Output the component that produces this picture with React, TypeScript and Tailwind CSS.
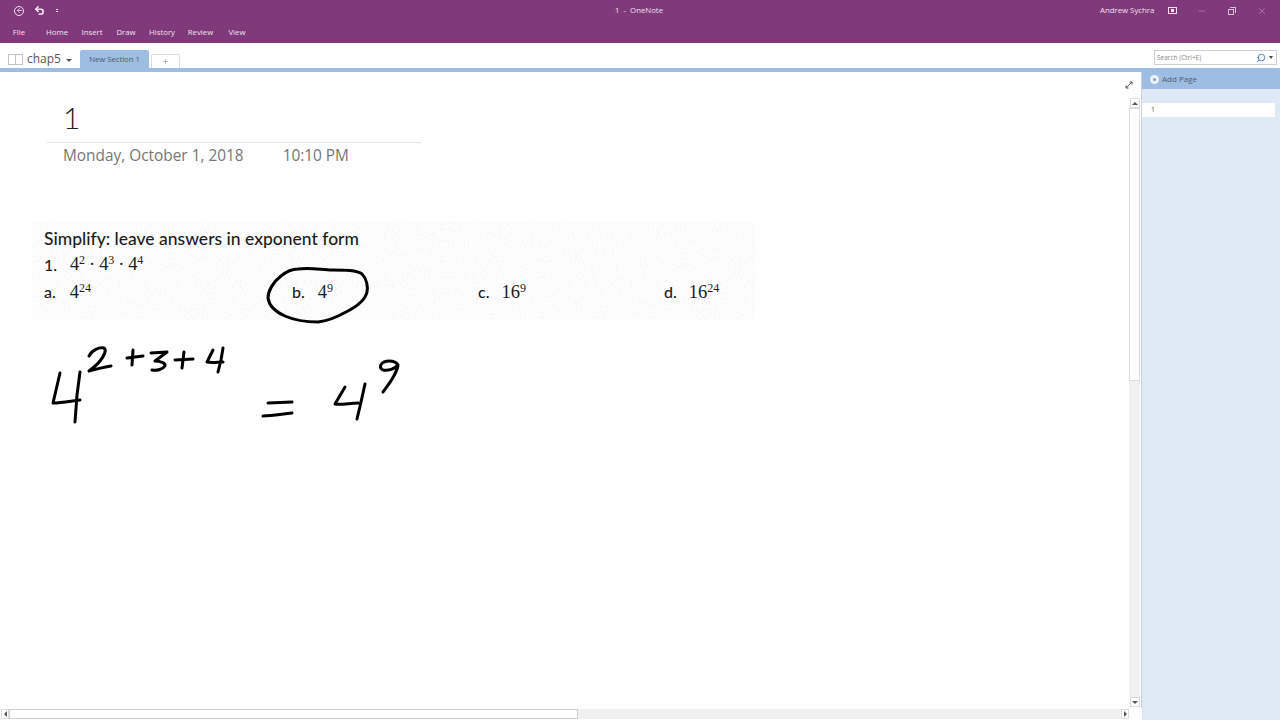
import { ArrowLeft, Search, Undo2, X, Minus, Plus } from 'lucide-react'

const tabs = [
  { label: 'File', width: 'w-[38px]' },
  { label: 'Home', width: 'w-[38px]' },
  { label: 'Insert', width: 'w-[32px]' },
  { label: 'Draw', width: 'w-[36px]' },
  { label: 'History', width: 'w-[36px]' },
  { label: 'Review', width: 'w-[41px]' },
  { label: 'View', width: 'w-[32px]' },
]

function TitleBar() {
  return (
    <header className="h-[43px] shrink-0 bg-[#80397b] text-[#efe2ee]">
      <div className="flex h-[21px] items-center">
        <div className="flex w-[14px]" />
        <span className="flex h-[10px] w-[10px] items-center justify-center rounded-full border border-[#efe2ee]">
          <ArrowLeft size={7} strokeWidth={2.5} />
        </span>
        <Undo2 size={11} strokeWidth={3} className="ml-[10px] text-white" />
        <span className="ml-[11px] flex flex-col gap-[1px]">
          <span className="h-[1px] w-[2px] bg-[#efe2ee]" />
          <span className="h-[1px] w-[2px] bg-[#efe2ee]" />
        </span>
        <span className="ml-[557px] w-[60px] whitespace-pre text-[7.8px] [font-family:'Open_Sans',sans-serif]">1  -  OneNote</span>
        <span className="ml-[425px] w-[60px] whitespace-nowrap text-[7.8px] [font-family:'Open_Sans',sans-serif]">Andrew Sychra</span>
        <span className="ml-[8px] flex h-[7px] w-[9px] items-center justify-center border border-[#efe2ee]">
          <span className="h-[3px] w-[3px] bg-[#efe2ee]" />
        </span>
        <Minus size={10} strokeWidth={1} className="ml-[20px] opacity-80" />
        <span className="relative ml-[21px] h-[8px] w-[8px] opacity-80">
          <span className="absolute bottom-0 left-0 h-[6px] w-[6px] border border-[#efe2ee]" />
          <span className="absolute right-0 top-0 h-[6px] w-[6px] border-r border-t border-[#efe2ee]" />
        </span>
        <X size={10} strokeWidth={1} className="ml-[21px] opacity-80" />
      </div>
      <nav className="flex h-[22px] items-center pt-[2px] text-[7.8px] [font-family:'Open_Sans',sans-serif]">
        {tabs.map((tab) => (
          <span key={tab.label} className={`${tab.width} whitespace-nowrap text-center`}>
            {tab.label}
          </span>
        ))}
      </nav>
    </header>
  )
}

function SectionBar() {
  return (
    <div className="relative flex h-[25px] shrink-0 items-end bg-white pl-[8px] [font-family:'Open_Sans',sans-serif]">
      <div className="flex h-[18px] items-center text-[#555]">
        <span className="flex h-[11px] w-[15px] border border-[#c4c4c4]">
          <span className="w-1/2 border-r border-[#c4c4c4]" />
        </span>
        <span className="ml-[4px] text-[12px]">chap5</span>
        <span className="ml-[5px] mt-[2px] h-0 w-0 border-x-[3px] border-t-[3px] border-x-transparent border-t-[#555]" />
      </div>
      <div className="ml-[8px] flex h-[18px] w-[69px] items-center justify-center rounded-t-[2px] bg-[#9dbde3] pt-[2px] text-[7.7px] text-[#4c5a6b]">
        New Section 1
      </div>
      <div className="ml-[2px] flex h-[14px] w-[29px] items-center justify-center rounded-t-[2px] border-x border-t border-[#dcdcdc] pb-[1px] text-[#666]">
        <Plus size={7} strokeWidth={1.5} />
      </div>
      <div className="mb-[3px] ml-auto mr-[3px] flex h-[15px] w-[123px] items-center border border-[#cfcfcf] pl-[2px] pr-[2px] text-[6.5px] text-[#8a8a8a]">
        <span className="flex-1">Search (Ctrl+E)</span>
        <Search size={10} strokeWidth={2} className="-scale-x-100 text-[#2f6db0]" />
        <span className="ml-[3px] mr-[1px] h-0 w-0 border-x-[2px] border-t-[3px] border-x-transparent border-t-[#444]" />
      </div>
    </div>
  )
}

function Sup({ children }: { children: string }) {
  return <span className="relative -top-[6px] text-[12px]">{children}</span>
}

function ScanImage() {
  return (
    <div className="absolute left-[32px] top-[150px] h-[98px] w-[723px] overflow-hidden bg-[#fdfdfd] pl-[12px] pt-[6px] text-[#1c1c1c]">
      <svg className="absolute inset-0 h-full w-full" aria-hidden="true">
        <filter id="speckle">
          <feTurbulence type="fractalNoise" baseFrequency="0.5" numOctaves="2" seed="4" />
          <feColorMatrix values="0 0 0 0 0.6  0 0 0 0 0.6  0 0 0 0 0.6  0 0 0 2.4 -1.15" />
        </filter>
        <rect width="100%" height="100%" filter="url(#speckle)" opacity="0.2" />
      </svg>
      <div className="relative">
        <p className="h-[23px] whitespace-nowrap text-[17.5px] leading-[21px] [font-family:'Lato',sans-serif] font-medium">
          Simplify: leave answers in exponent form
        </p>
        <p className="flex h-[28px] items-center whitespace-nowrap text-[16px]">
          <span className="w-[26px] [font-family:'Lato',sans-serif] font-medium">1.</span>
          <span className="text-[18.5px] tracking-[-0.3px] [font-family:'Liberation_Serif',serif]">
            4<Sup>2</Sup> · 4<Sup>3</Sup> · 4<Sup>4</Sup>
          </span>
        </p>
        <div className="grid h-[28px] grid-cols-[248px_186px_186px_1fr] items-center whitespace-nowrap text-[16px] [font-family:'Lato',sans-serif] font-medium">
          <span>
            a.<span className="ml-[14px] text-[18.5px] [font-family:'Liberation_Serif',serif] font-normal">4<Sup>24</Sup></span>
          </span>
          <span>
            b.<span className="ml-[13px] text-[18.5px] [font-family:'Liberation_Serif',serif] font-normal">4<Sup>9</Sup></span>
          </span>
          <span>
            c.<span className="ml-[12px] text-[18.5px] [font-family:'Liberation_Serif',serif] font-normal">16<Sup>9</Sup></span>
          </span>
          <span>
            d.<span className="ml-[12px] text-[18.5px] [font-family:'Liberation_Serif',serif] font-normal">16<Sup>24</Sup></span>
          </span>
        </div>
      </div>
    </div>
  )
}

// handwriting, coordinates are page pixels shifted up by the 72px chrome
function Ink() {
  return (
    <svg
      className="absolute left-0 top-0 h-[640px] w-[1129px]"
      viewBox="0 72 1129 640"
      fill="none"
      stroke="#000"
      strokeWidth="3"
      strokeLinecap="round"
      strokeLinejoin="round"
    >
      <path d="M298 269C310 267 322 270 332 270C345 270 357 270 362 274C367 279 368 287 367 292C365 301 356 307 346 312C337 317 328 321 318 322C306 322 294 320 285 316C276 312 269 306 268 298C268 291 273 282 281 276C287 271 292 269 298 269Z" />
      <path d="M60 373L53 403C62 403 71 401 80 400M80 372L77 395L75 422" />
      <path d="M89 356C92 350 99 347 104 348C107 350 104 356 100 361C97 365 93 368 89 371C94 370 103 367 111 366" />
      <path d="M127 358L143 356M133 350L132 365" />
      <path d="M151 353L167 352L155 361C160 361 166 363 165 366C163 369 157 371 152 370" />
      <path d="M175 360L193 359M184 352L182 368" />
      <path d="M213 350L207 362C212 363 218 362 223 362M223 348L221 360L218 372" />
      <path d="M268 403L292 402M263 416C272 416 282 414 292 413" />
      <path d="M345 387L335 404C342 405 350 403 358 403M365 384L361 402L357 419" />
      <path d="M398 365C396 361 389 360 384 362C380 364 379 368 383 370C388 371 395 369 398 365C397 374 389 384 383 392" />
    </svg>
  )
}

function Canvas() {
  return (
    <div className="relative min-h-0 flex-1 bg-white">
      <div className="px-[47px] pt-[28px]">
        <h1 className="ml-[16px] h-[42px] text-[30px] leading-[34px] font-light text-[#222] [font-family:'Lato',sans-serif]">1</h1>
        <div className="w-[374px] border-t border-[#e3e3e3] pl-[16px] pt-[1px] text-[15.4px] text-[#767676] [font-family:'Open_Sans',sans-serif]">
          <span>Monday, October 1, 2018</span>
          <span className="ml-[39px]">10:10 PM</span>
        </div>
      </div>
      <ScanImage />
      <Ink />
      <svg className="absolute right-[-4px] top-[9px] h-[8px] w-[8px] text-[#555]" viewBox="0 0 8 8" fill="none" stroke="currentColor" strokeWidth="1">
        <path d="M1 7L7 1M4.5 1H7V3.5M1 4.5V7H3.5" />
      </svg>
    </div>
  )
}

function ScrollArrow({ up }: { up: boolean }) {
  return (
    <div className="flex h-[10px] w-[10px] shrink-0 items-center justify-center border border-[#dcdcdc] bg-white">
      <span className={`h-0 w-0 border-x-[3px] border-x-transparent ${up ? 'border-b-[3px] border-b-[#555]' : 'border-t-[3px] border-t-[#555]'}`} />
    </div>
  )
}

function PagePanel() {
  return (
    <aside className="w-[138px] shrink-0 bg-[#dfe9f5] [font-family:'Open_Sans',sans-serif]">
      <div className="flex h-[17px] items-center bg-[#9dbde3] pb-[3px] pl-[8px] text-[8px] text-[#4f6074]">
        <span className="flex h-[9px] w-[9px] items-center justify-center rounded-full bg-[#eef3f9]">
          <span className="h-[3px] w-[3px] rounded-full bg-[#7f9cc0]" />
        </span>
        <span className="ml-[3px]">Add Page</span>
      </div>
      <div className="mt-[14px] flex h-[14px] w-[133px] items-center bg-white pl-[9px] pt-[1px] text-[7px] text-[#555]">1</div>
    </aside>
  )
}

export default function App() {
  return (
    <div className="flex h-[720px] w-[1280px] flex-col overflow-hidden bg-white">
      <TitleBar />
      <SectionBar />
      <div className="h-[4px] shrink-0 bg-[#9dbde3]" />
      <main className="flex min-h-0 flex-1">
        <div className="flex min-w-0 flex-1 flex-col">
          <div className="flex min-h-0 flex-1">
            <Canvas />
            <div className="flex w-[13px] shrink-0 flex-col items-center border-r border-[#c9d3df] bg-white pb-[1px] pr-[1px] pt-[26px]">
              <ScrollArrow up />
              <div className="h-[273px] w-[11px] shrink-0 border border-[#dcdcdc] bg-white" />
              <div className="w-[11px] flex-1 bg-[#f1f1f1]" />
              <ScrollArrow up={false} />
            </div>
          </div>
          <div className="flex h-[12px] shrink-0 items-start pl-[1px] pr-[13px] pt-[1px]">
            <div className="flex h-[10px] w-[8px] shrink-0 items-center justify-center border border-[#dcdcdc]">
              <span className="h-0 w-0 border-y-[3px] border-r-[3px] border-y-transparent border-r-[#555]" />
            </div>
            <div className="h-[10px] w-[569px] shrink-0 border border-[#d0d0d0] bg-white" />
            <div className="h-[10px] flex-1 bg-[#f1f1f1]" />
            <div className="flex h-[10px] w-[8px] shrink-0 items-center justify-center border border-[#dcdcdc]">
              <span className="h-0 w-0 border-y-[3px] border-l-[3px] border-y-transparent border-l-[#555]" />
            </div>
          </div>
        </div>
        <PagePanel />
      </main>
    </div>
  )
}
